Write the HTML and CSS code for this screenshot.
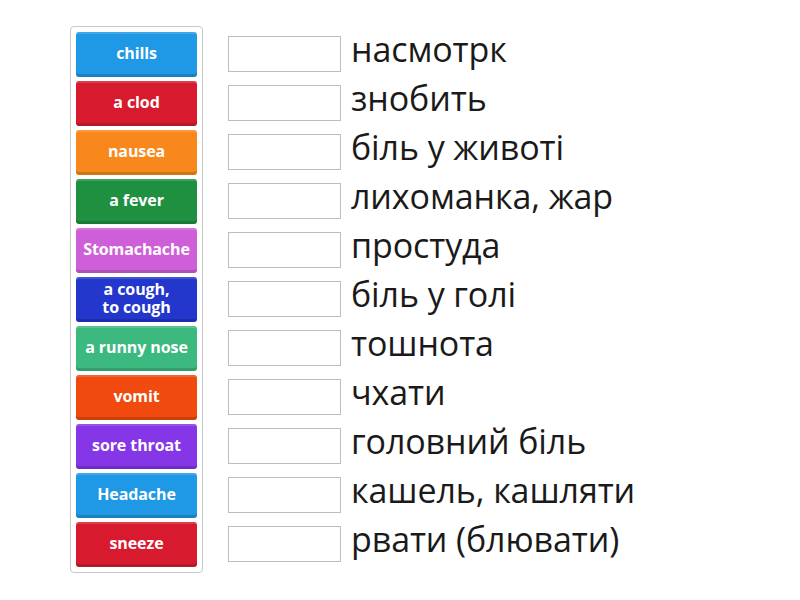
FILE: index.html
```html
<!DOCTYPE html>
<html>
<head>
<meta charset="utf-8">
<link rel="stylesheet" href="styles.css">
</head>
<body>
<div class="game">
  <div class="tray">
    <div class="tile t-blue">chills</div>
    <div class="tile t-red">a clod</div>
    <div class="tile t-orange">nausea</div>
    <div class="tile t-green">a fever</div>
    <div class="tile t-pink">Stomachache</div>
    <div class="tile t-navy">a cough,<br>to cough</div>
    <div class="tile t-teal">a runny nose</div>
    <div class="tile t-vermil">vomit</div>
    <div class="tile t-purple">sore throat</div>
    <div class="tile t-blue">Headache</div>
    <div class="tile t-red">sneeze</div>
  </div>
  <div class="targets">
    <div class="row"><div class="slot"></div><span class="label">насмотрк</span></div>
    <div class="row"><div class="slot"></div><span class="label">знобить</span></div>
    <div class="row"><div class="slot"></div><span class="label">біль у животі</span></div>
    <div class="row"><div class="slot"></div><span class="label">лихоманка, жар</span></div>
    <div class="row"><div class="slot"></div><span class="label">простуда</span></div>
    <div class="row"><div class="slot"></div><span class="label">біль у голі</span></div>
    <div class="row"><div class="slot"></div><span class="label">тошнота</span></div>
    <div class="row"><div class="slot"></div><span class="label">чхати</span></div>
    <div class="row"><div class="slot"></div><span class="label">головний біль</span></div>
    <div class="row"><div class="slot"></div><span class="label">кашель, кашляти</span></div>
    <div class="row"><div class="slot"></div><span class="label">рвати (блювати)</span></div>
  </div>
</div>
</body>
</html>
```

FILE: styles.css
```css
html, body {
  margin: 0;
  padding: 0;
  background: #ffffff;
}
body {
  font-family: "Open Sans", "Liberation Sans", sans-serif;
}
.game {
  display: flex;
  align-items: flex-start;
  padding: 26px 0 0 70px;
}
.tray {
  display: flex;
  flex-direction: column;
  gap: 4px;
  padding: 5px;
  border: 1px solid #c8c8c8;
  border-radius: 4px;
  width: 121px;
}
.tile {
  height: 45px;
  box-sizing: border-box;
  padding-bottom: 3px;
  border-radius: 3px;
  display: flex;
  align-items: center;
  justify-content: center;
  text-align: center;
  color: #ffffff;
  font-weight: 700;
  font-size: 16px;
  line-height: 18px;
  letter-spacing: -0.1px;
  white-space: nowrap;
  box-shadow: inset 0 -3px 0 rgba(0,0,0,0.15), inset 0 2px 0 rgba(255,255,255,0.15);
}
.t-blue   { background: #1f98e6; }
.t-red    { background: #d81a2f; }
.t-orange { background: #f8871c; }
.t-green  { background: #1f8f40; }
.t-pink   { background: #cf5fd8; }
.t-navy   { background: #2337cc; }
.t-teal   { background: #3cb97f; }
.t-vermil { background: #f04a0e; }
.t-purple { background: #8536e6; }
.targets {
  display: flex;
  flex-direction: column;
  margin-left: 25px;
  padding-top: 6px;
}
.row {
  height: 49px;
  display: flex;
  align-items: flex-start;
  gap: 10px;
}
.row .slot {
  width: 111px;
  height: 34px;
  border: 1px solid #bdbdbd;
  margin-top: 4px;
  flex: none;
}
.label {
  font-size: 34px;
  line-height: 40px;
  letter-spacing: -0.1px;
  color: #1a1a1a;
  margin-top: -3px;
  white-space: nowrap;
}
```
